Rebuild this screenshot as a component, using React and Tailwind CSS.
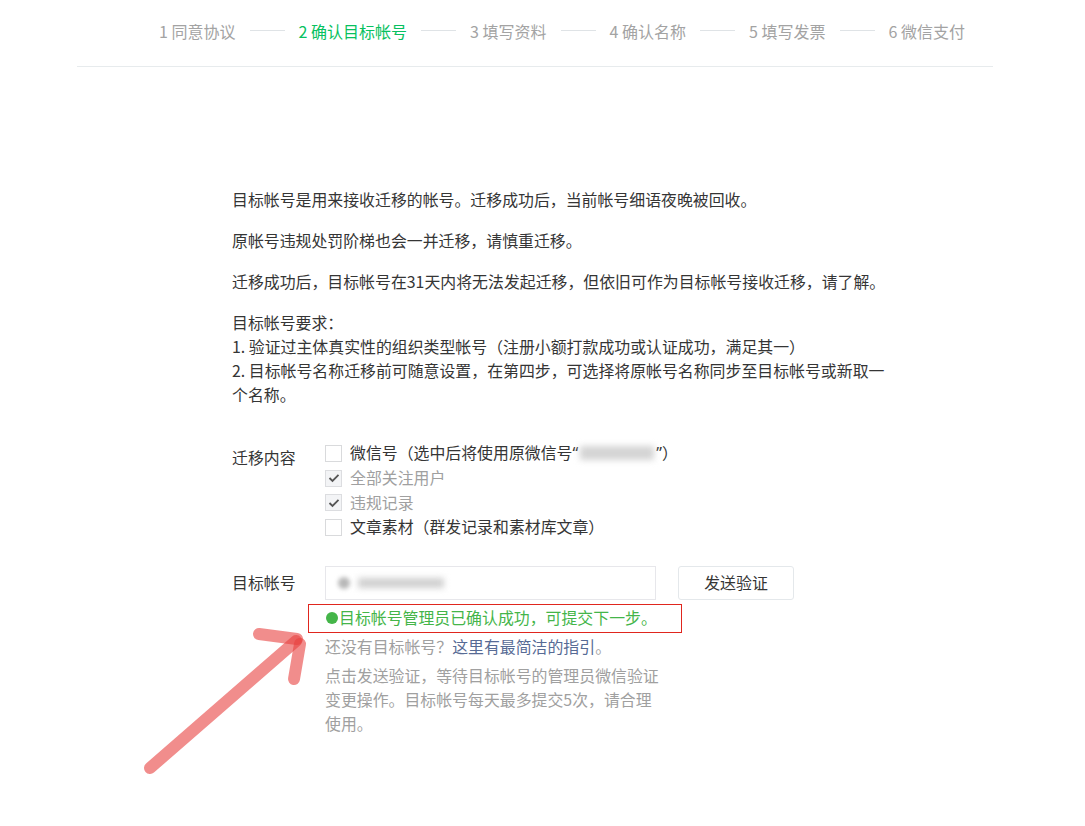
import React from "react";

const FONT = { fontFamily: '"Noto Sans CJK SC", "Noto Sans", sans-serif' };

function Step({ n, label, active }) {
  return (
    <span className={active ? "text-[#07c160]" : "text-[#a3a3a3]"}>
      {n} {label}
    </span>
  );
}

function Line() {
  return <span className="block w-[35px] h-px bg-[#dfe3e6]" />;
}

function Check({ checked, children, muted }) {
  return (
    <div className="flex items-center h-[24.7px]">
      <span
        className={
          "w-[17px] h-[17px] border flex items-center justify-center shrink-0 " +
          (checked ? "border-[#dcdde0] bg-[#f3f4f6]" : "border-[#d9dadc] bg-white")
        }
      >
        {checked && (
          <svg width="12" height="10" viewBox="0 0 12 10">
            <path d="M1.5 5 L4.5 8 L10.5 1.8" fill="none" stroke="#555" strokeWidth="1.8" />
          </svg>
        )}
      </span>
      <span className={"ml-[8px] whitespace-nowrap flex items-center " + (muted ? "text-[#a0a0a0]" : "text-[#353535]")}>
        {children}
      </span>
    </div>
  );
}

export default function App() {
  return (
    <div className="relative w-[1085px] min-h-[826px] bg-white text-[15.9px] text-[#353535]" style={FONT}>
      <div className="ml-[77px] w-[916px] h-[67px] border-b border-[#e7ebed] flex items-center pl-[82px] pb-[5px] gap-[14px] leading-none text-[16px]">
        <Step n="1" label="同意协议" />
        <Line />
        <Step n="2" label="确认目标帐号" active />
        <Line />
        <Step n="3" label="填写资料" />
        <Line />
        <Step n="4" label="确认名称" />
        <Line />
        <Step n="5" label="填写发票" />
        <Line />
        <Step n="6" label="微信支付" />
      </div>

      <div className="pl-[232px] pt-[121px] leading-[24px]">
        <div className="w-[660px]">
          <p className="mb-[17px]">目标帐号是用来接收迁移的帐号。迁移成功后，当前帐号细语夜晚被回收。</p>
          <p className="mb-[17px]">原帐号违规处罚阶梯也会一并迁移，请慎重迁移。</p>
          <p className="mb-[17px]">迁移成功后，目标帐号在31天内将无法发起迁移，但依旧可作为目标帐号接收迁移，请了解。</p>
          <div>
            <p>目标帐号要求：</p>
            <p>1. 验证过主体真实性的组织类型帐号（注册小额打款成功或认证成功，满足其一）</p>
            <p>2. 目标帐号名称迁移前可随意设置，在第四步，可选择将原帐号名称同步至目标帐号或新取一个名称。</p>
          </div>
        </div>

        <div className="flex mt-[34px]">
          <div className="w-[93px] pt-[5px]">迁移内容</div>
          <div className="flex flex-col">
            <Check>
              微信号（选中后将使用原微信号
              <span style={{ fontFamily: '"Noto Sans", sans-serif' }}>“</span>
              <span className="inline-block w-[74px] h-[14px] bg-[#d4d4d4] blur-[3px] mx-[2px]" />
              <span style={{ fontFamily: '"Noto Sans", sans-serif' }}>”</span>）
            </Check>
            <Check checked muted>全部关注用户</Check>
            <Check checked muted>违规记录</Check>
            <Check>文章素材（群发记录和素材库文章）</Check>
          </div>
        </div>

        <div className="flex mt-[26px]">
          <div className="w-[93px] h-[34px] flex items-center">目标帐号</div>
          <div className="flex flex-col">
            <div className="flex items-center">
              <div className="w-[331px] h-[34px] border border-[#e7e7eb] flex items-center pl-[12px] gap-[8px]">
                <span className="w-[12px] h-[12px] rounded-full bg-[#b8b8b8] blur-[2px]" />
                <span className="w-[86px] h-[10px] bg-[#d0d0d0] blur-[3px]" />
              </div>
              <button className="ml-[22px] w-[116px] h-[34px] border border-[#e4e8eb] rounded-[3px] bg-white text-[#353535] leading-none">
                发送验证
              </button>
            </div>
            <div className="-ml-[17px] mt-[4px] w-[374px] h-[29px] border border-[#e0261e] flex items-center pl-[17px] text-[#44b549]">
              <span className="w-[12px] h-[12px] rounded-full bg-[#44b549] mr-[1px] shrink-0" />
              目标帐号管理员已确认成功，可提交下一步。
            </div>
            <div className="mt-[2px] text-[#a0a0a0]">
              还没有目标帐号？<span className="text-[#576b95]">这里有最简洁的指引</span>。
            </div>
            <div className="mt-[5px] w-[340px] text-[#a0a0a0]">
              点击发送验证，等待目标帐号的管理员微信验证变更操作。目标帐号每天最多提交5次，请合理使用。
            </div>
          </div>
        </div>
      </div>

      <svg className="absolute top-0 left-0 pointer-events-none" width="1085" height="826" viewBox="0 0 1085 826">
        <g stroke="#e8413f" strokeOpacity="0.6" strokeWidth="12" strokeLinecap="round" fill="none">
          <line x1="150" y1="768" x2="296" y2="641" />
          <line x1="259" y1="634" x2="297" y2="639" />
          <line x1="300" y1="644" x2="294" y2="679" />
        </g>
      </svg>
    </div>
  );
}
